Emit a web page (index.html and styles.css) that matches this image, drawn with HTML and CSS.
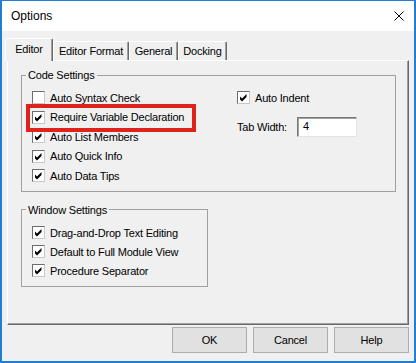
FILE: index.html
```html
<!DOCTYPE html>
<html lang="en">
<head>
    <meta charset="UTF-8">
    <meta name="viewport" content="width=device-width, initial-scale=1.0">
    <title>Options</title>
    <link rel="stylesheet" href="styles.css">
</head>
<body>
    <div class="window">
        <div class="titlebar">
            <span class="title">Options</span>
            <svg class="close" width="10" height="10" viewBox="0 0 10 10">
                <path d="M0.5 0.5L9.5 9.5M9.5 0.5L0.5 9.5" stroke="#000" stroke-width="1"/>
            </svg>
        </div>

        <div class="client">
            <div class="tabs">
                <div class="tab active tab-editor">Editor</div>
                <div class="tab tab-format">Editor Format</div>
                <div class="tab tab-general">General</div>
                <div class="tab tab-docking">Docking</div>
            </div>

            <div class="panel">
                <fieldset class="group code-settings">
                    <legend>Code Settings</legend>
                    <div class="columns">
                        <div class="column main">
                            <label class="option"><span class="box"></span>Auto Syntax Check</label>
                            <label class="option highlight"><span class="box"><svg viewBox="0 0 11 11"><path d="M2 4.5L4 6.5L8.5 2V5L4 9.5L2 7.5Z"/></svg></span>Require Variable Declaration</label>
                            <label class="option"><span class="box"><svg viewBox="0 0 11 11"><path d="M2 4.5L4 6.5L8.5 2V5L4 9.5L2 7.5Z"/></svg></span>Auto List Members</label>
                            <label class="option"><span class="box"><svg viewBox="0 0 11 11"><path d="M2 4.5L4 6.5L8.5 2V5L4 9.5L2 7.5Z"/></svg></span>Auto Quick Info</label>
                            <label class="option"><span class="box"><svg viewBox="0 0 11 11"><path d="M2 4.5L4 6.5L8.5 2V5L4 9.5L2 7.5Z"/></svg></span>Auto Data Tips</label>
                        </div>
                        <div class="column side">
                            <label class="option"><span class="box"><svg viewBox="0 0 11 11"><path d="M2 4.5L4 6.5L8.5 2V5L4 9.5L2 7.5Z"/></svg></span>Auto Indent</label>
                            <div class="field">
                                <span class="field-label">Tab Width:</span>
                                <span class="textbox">4</span>
                            </div>
                        </div>
                    </div>
                </fieldset>

                <fieldset class="group window-settings">
                    <legend>Window Settings</legend>
                    <div class="columns">
                        <div class="column">
                            <label class="option"><span class="box"><svg viewBox="0 0 11 11"><path d="M2 4.5L4 6.5L8.5 2V5L4 9.5L2 7.5Z"/></svg></span>Drag-and-Drop Text Editing</label>
                            <label class="option"><span class="box"><svg viewBox="0 0 11 11"><path d="M2 4.5L4 6.5L8.5 2V5L4 9.5L2 7.5Z"/></svg></span>Default to Full Module View</label>
                            <label class="option"><span class="box"><svg viewBox="0 0 11 11"><path d="M2 4.5L4 6.5L8.5 2V5L4 9.5L2 7.5Z"/></svg></span>Procedure Separator</label>
                        </div>
                    </div>
                </fieldset>
            </div>

            <div class="buttons">
                <button>OK</button>
                <button>Cancel</button>
                <button>Help</button>
            </div>
        </div>
    </div>
</body>
</html>
```

FILE: styles.css
```css
*,
*::after {
    box-sizing: border-box;
}

body {
    margin: 0;
    font-family: 'Liberation Sans', Arial, sans-serif;
    font-size: 11px;
    letter-spacing: -0.2px;
    color: #000;
    background-color: #fff;
}

.window {
    width: 416px;
    height: 363px;
    border: 2px solid #1f7fd4;
    border-top-width: 1px;
    display: flex;
    flex-direction: column;
}

.titlebar {
    height: 30px;
    flex-shrink: 0;
    display: flex;
    align-items: center;
    justify-content: space-between;
    padding: 0 10px 0 9px;
    background-color: #fff;
}

.title {
    font-size: 12px;
    letter-spacing: 0;
}

.client {
    flex: 1;
    display: flex;
    flex-direction: column;
    padding: 7px 5px 8px;
    background-color: #f0f0f0;
}

/* tab strip */
.tabs {
    display: flex;
    align-items: flex-end;
    height: 22px;
    margin-left: -2px;
    position: relative;
    z-index: 1;
}

.tab {
    height: 19px;
    display: flex;
    align-items: center;
    justify-content: center;
    padding-bottom: 1px;
    border-top: 1px solid #fff;
    border-left: 1px solid #fff;
    border-right: 1px solid #696969;
    border-radius: 2px 2px 0 0;
    box-shadow: inset -1px 0 0 #a0a0a0;
}

.tab.active {
    height: 23px;
    margin-bottom: -1px;
    padding-bottom: 3px;
    background-color: #f0f0f0;
}

.tab-editor { width: 48px; }
.tab-format { width: 76px; }
.tab-general { width: 49px; }
.tab-docking { width: 49px; }

.panel {
    height: 265px;
    flex-shrink: 0;
    padding: 7px 0 0 13px;
    border: 1px solid;
    border-color: #fff #696969 #696969 #fff;
    box-shadow: inset -1px -1px 0 #a0a0a0;
}

/* group boxes */
.group {
    margin: 0;
    padding: 0;
    min-width: 0;
    border: 1px solid #a0a0a0;
}

.group legend {
    margin-left: 4px;
    padding: 0 2px;
    line-height: 14px;
}

.code-settings {
    width: 375px;
}

.code-settings .columns {
    padding: 6px 0 5px 10px;
}

.window-settings {
    width: 187px;
    margin-top: 11px;
}

.window-settings .columns {
    padding: 6.5px 0 6px 10px;
}

.window-settings .option {
    height: 19px;
}

.columns {
    display: flex;
}

.column.main {
    width: 205px;
}

.option {
    display: flex;
    align-items: center;
    gap: 5px;
    height: 19.5px;
    white-space: nowrap;
}

.box {
    width: 13px;
    height: 13px;
    flex-shrink: 0;
    background-color: #fff;
    border: 1px solid;
    border-color: #6d6d6d #c8c8c8 #c8c8c8 #6d6d6d;
}

.box svg {
    display: block;
    width: 11px;
    height: 11px;
    fill: #000;
}

.highlight {
    position: relative;
}

.highlight::after {
    content: "";
    position: absolute;
    left: -6px;
    top: -4px;
    width: 170px;
    height: 28px;
    border: 4px solid #e0221c;
}

.field {
    display: flex;
    align-items: center;
    margin-top: 9.5px;
}

.field-label {
    width: 60px;
}

.textbox {
    width: 60px;
    height: 20px;
    padding: 2px 5px;
    background-color: #fff;
    border: 1px solid;
    border-color: #7a7a7a #e3e3e3 #e3e3e3 #7a7a7a;
    box-shadow: inset 1px 1px 0 #a0a0a0;
}

/* dialog buttons */
.buttons {
    display: flex;
    justify-content: flex-end;
    gap: 6px;
    margin-top: 2px;
}

button {
    width: 75px;
    height: 26px;
    padding: 0;
    font-family: inherit;
    font-size: 11px;
    letter-spacing: inherit;
    color: #000;
    background-color: #e1e1e1;
    border: 1px solid #adadad;
}
```
